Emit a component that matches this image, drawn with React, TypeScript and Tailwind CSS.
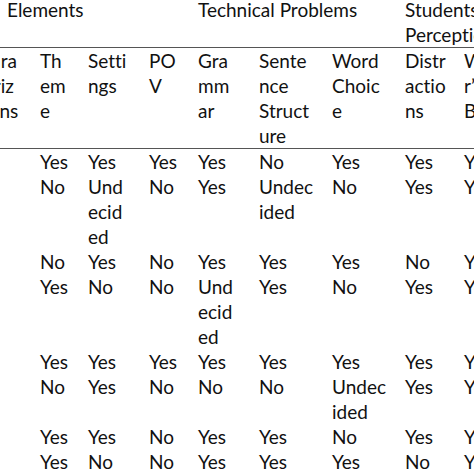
const header2: string[] = [
  'Chara\ncteriz\nations',
  'Th\nem\ne',
  'Setti\nngs',
  'PO\nV',
  'Gra\nmm\nar',
  'Sente\nnce\nStruct\nure',
  'Word\nChoic\ne',
  'Distr\nactio\nns',
  'Write\nr\u2019s\nBlock',
]

const rows: string[][] = [
  ['', 'Yes', 'Yes', 'Yes', 'Yes', 'No', 'Yes', 'Yes', 'Yes'],
  ['', 'No', 'Und\necid\ned', 'No', 'Yes', 'Undec\nided', 'No', 'Yes', 'Yes'],
  ['', 'No', 'Yes', 'No', 'Yes', 'Yes', 'Yes', 'No', 'Yes'],
  ['', 'Yes', 'No', 'No', 'Und\necid\ned', 'Yes', 'No', 'Yes', 'Yes'],
  ['', 'Yes', 'Yes', 'Yes', 'Yes', 'Yes', 'Yes', 'Yes', 'Yes'],
  ['', 'No', 'Yes', 'No', 'No', 'No', 'Undec\nided', 'Yes', 'Yes'],
  ['', 'Yes', 'Yes', 'No', 'Yes', 'Yes', 'No', 'Yes', 'Yes'],
  ['', 'Yes', 'No', 'No', 'Yes', 'Yes', 'Yes', 'No', 'Yes'],
]

const cols = 'grid grid-cols-[74px_48px_61px_49px_61px_73px_73px_59px_80px]'

export default function App() {
  return (
    <div className="h-[474px] w-[474px] overflow-hidden bg-white text-[#111]">
      <div
        className="ml-[-34px] mt-[-3px] w-[578px] text-[19px] leading-[25px] [font-variant-ligatures:none]"
        style={{ fontFamily: 'Lato, "Open Sans", sans-serif' }}
      >
        <div className={`${cols} border-b-[1.5px] border-[#555]`}>
          <div className="col-span-4 pl-[41px]">Elements</div>
          <div className="col-span-3">Technical Problems</div>
          <div className="col-span-2">
            Students&rsquo;
            <br />
            Perception
          </div>
        </div>
        <div className={`${cols} border-b-[1.5px] border-[#555]`}>
          {header2.map((h, i) => (
            <div key={i} className={i === 0 ? 'ml-[2px] whitespace-pre-line' : 'whitespace-pre-line'}>
              {h}
            </div>
          ))}
        </div>
        {rows.map((r, ri) => (
          <div key={ri} className={cols}>
            {r.map((c, ci) => (
              <div key={ci} className="whitespace-pre-line">
                {c}
              </div>
            ))}
          </div>
        ))}
      </div>
    </div>
  )
}
